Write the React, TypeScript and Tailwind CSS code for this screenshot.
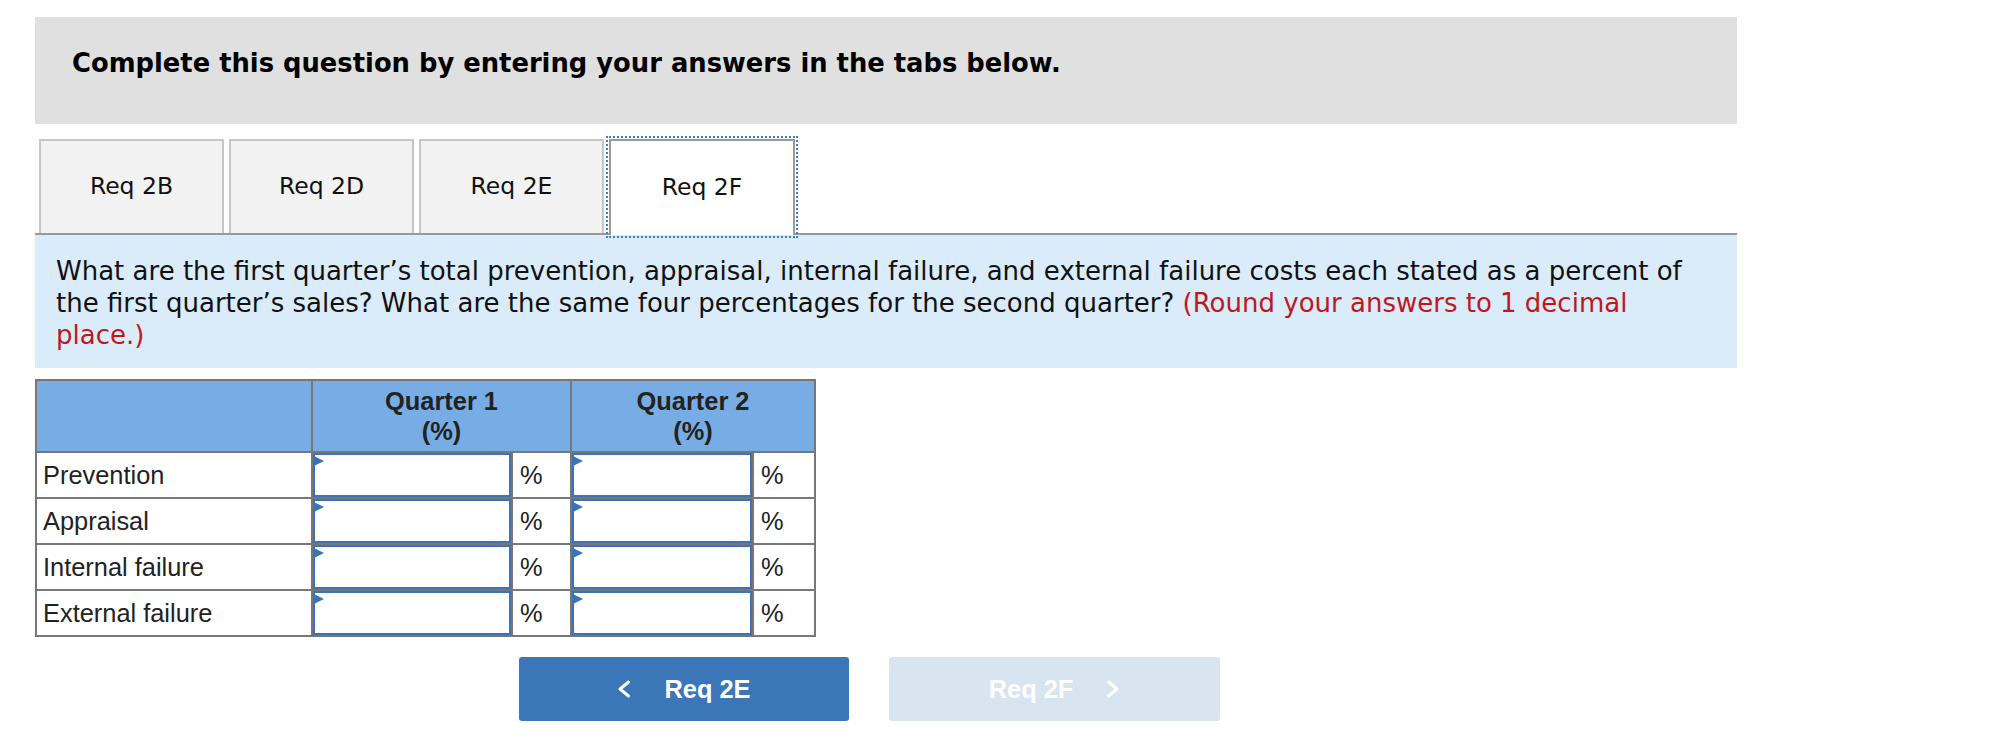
import React from 'react'

const verdana = { fontFamily: '"DejaVu Sans", Verdana, sans-serif' }
const arial = { fontFamily: '"Liberation Sans", Arial, sans-serif' }

const tabs = ['Req 2B', 'Req 2D', 'Req 2E', 'Req 2F']
const rows = ['Prevention', 'Appraisal', 'Internal failure', 'External failure']

function Tab({ label, active }: { label: string; active?: boolean }) {
  if (active) {
    return (
      <div className="relative z-10 -mb-[2px] flex h-[96px] w-[186px] items-center justify-center border-2 border-b-0 border-[#999] bg-white text-[23.5px] text-[#111] outline-2 outline-offset-1 outline-dotted outline-[#3f7fc9]">
        {label}
      </div>
    )
  }
  return (
    <div className="flex h-[94px] w-[185px] items-center justify-center border-2 border-b-0 border-[#c6c6c6] bg-[#f2f2f2] text-[23.5px] text-[#111]">
      {label}
    </div>
  )
}

function AnswerInput() {
  return (
    <div className="relative h-full w-full bg-white">
      <input className="h-full w-full border-2 border-[#3b73b9] bg-white outline-none" />
      {/* 左上角的小三角标记 */}
      <span className="pointer-events-none absolute left-[1px] top-[3px] h-0 w-0 border-y-[5px] border-l-[10px] border-y-transparent border-l-[#3b73b9]" />
    </div>
  )
}

function Chevron({ dir }: { dir: 'left' | 'right' }) {
  return (
    <svg width="14" height="18" viewBox="0 0 14 18" fill="none">
      <polyline
        points={dir === 'left' ? '11.5,2 3,9 11.5,16' : '2.5,2 11,9 2.5,16'}
        stroke="white"
        strokeWidth="3"
        strokeLinecap="round"
        strokeLinejoin="round"
      />
    </svg>
  )
}

export default function App() {
  return (
    <div className="min-h-[742px] bg-white pl-[35px] pt-[17px]">
      <div className="w-[1702px]">
        {/* 标题 */}
        <div className="h-[107px] bg-[#e0e0e0] pl-[37px] pt-[30px]" style={verdana}>
          <p className="text-[25.8px] font-bold leading-[32px] text-black">
            Complete this question by entering your answers in the tabs below.
          </p>
        </div>

        {/* 标签页 */}
        <div className="mt-[15px] flex items-end gap-[5px] pl-[4px]" style={verdana}>
          {tabs.map((t) => (
            <Tab key={t} label={t} active={t === 'Req 2F'} />
          ))}
        </div>
        <div className="h-[2px] bg-[#999]" />

        {/* 题目说明 */}
        <div className="bg-[#daebf9] pb-[17px] pl-[21px] pr-[20px] pt-[20px]" style={verdana}>
          <p className="text-[26px] leading-[32px] text-[#111]">
            What are the first quarter’s total prevention, appraisal, internal failure, and external failure
            costs each stated as a percent of the first quarter’s sales? What are the same four percentages for
            the second quarter?{' '}
            <span className="text-[#c0171f]">(Round your answers to 1 decimal place.)</span>
          </p>
        </div>

        {/* 答题表格 */}
        <div
          className="mt-[11px] grid w-[781px] grid-cols-[274px_198px_57px_180px_60px] gap-[2px] bg-[#777] p-[2px] text-[25.4px] text-[#222]"
          style={arial}
        >
          <div className="h-[70px] bg-[#78ace4]" />
          <div className="col-span-2 flex h-[70px] flex-col items-center justify-center bg-[#78ace4] font-bold leading-[30px]">
            <span>Quarter 1</span>
            <span>(%)</span>
          </div>
          <div className="col-span-2 flex h-[70px] flex-col items-center justify-center bg-[#78ace4] font-bold leading-[30px]">
            <span>Quarter 2</span>
            <span>(%)</span>
          </div>
          {rows.map((r) => (
            <React.Fragment key={r}>
              <div className="flex h-[44px] items-center bg-white pl-[6px]">{r}</div>
              <AnswerInput />
              <div className="flex h-[44px] items-center bg-white pl-[7px]">%</div>
              <AnswerInput />
              <div className="flex h-[44px] items-center bg-white pl-[7px]">%</div>
            </React.Fragment>
          ))}
        </div>

        {/* 上一步 / 下一步 */}
        <div className="ml-[484px] mt-[20px] flex gap-[40px] text-[25.4px] font-bold text-white" style={arial}>
          <button className="flex h-[64px] w-[330px] items-center justify-center gap-[33px] rounded-[3px] bg-[#3a76b8]">
            <Chevron dir="left" />
            <span>Req 2E</span>
          </button>
          <button className="flex h-[64px] w-[331px] items-center justify-center gap-[33px] rounded-[3px] bg-[#d9e4f1]">
            <span>Req 2F</span>
            <Chevron dir="right" />
          </button>
        </div>
      </div>
    </div>
  )
}
